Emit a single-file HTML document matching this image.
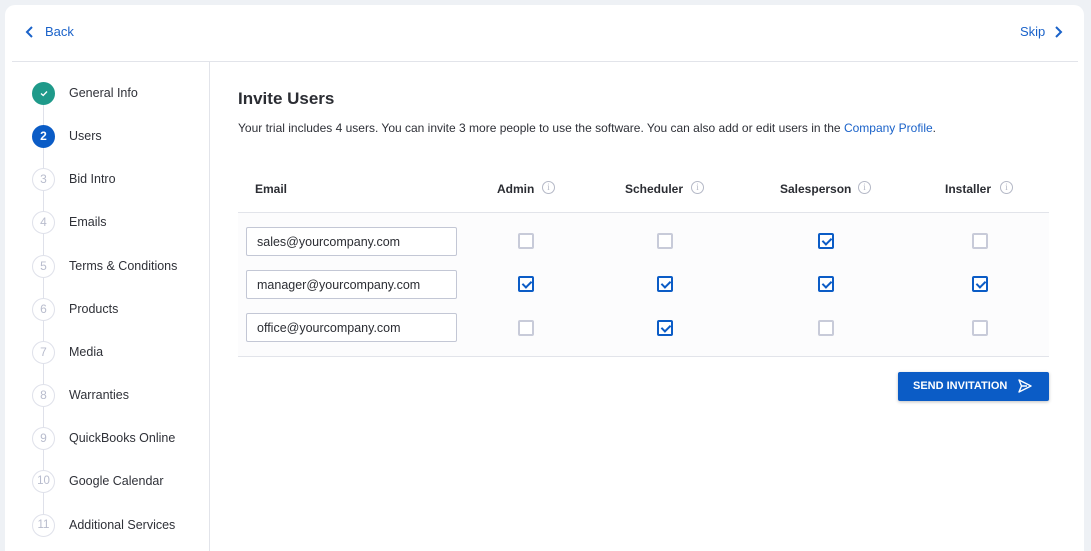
<!DOCTYPE html>
<html><head><meta charset="utf-8"><style>
*{box-sizing:border-box;margin:0;padding:0}
html,body{width:1091px;height:551px;overflow:hidden}
body{background:#eef1f5;font-family:"Liberation Sans",sans-serif;position:relative;color:#2b2d33}
.card{position:absolute;left:5px;top:5px;width:1079px;height:560px;background:#fff;border-radius:10px}
.abs{position:absolute}
.blue{color:#1a62c9}
.hline{position:absolute;height:1px;background:#e2e4ea}
.step{position:absolute;left:32px;width:23px;height:23px;border-radius:50%;border:1.5px solid #dfe1ea;background:#fff;color:#b8bccd;font-size:12px;text-align:center;line-height:20px}
.lbl{position:absolute;left:69px;font-size:12.5px;color:#2f3138}
.th{position:absolute;top:182px;font-size:12px;font-weight:bold;color:#2b2d33}
.info{position:absolute;top:181px;width:13px;height:13px;border:1px solid #b4b8c6;border-radius:50%;color:#b4b8c6;font-size:9px;text-align:center;line-height:11px;font-family:"Liberation Serif",serif}
.inp{position:absolute;left:246px;width:211px;height:29px;border:1px solid #c3c7d5;border-radius:2px;background:#fff;font-size:12.5px;padding-left:10px;line-height:28px;color:#2b2d33}
.cb{position:absolute;width:16px;height:16px;border:2px solid #c8cbd9;border-radius:2px;background:#fff}
.cb.on{border:2px solid #0b5cc6}
.cb.on::after{content:"";position:absolute;left:3.5px;top:0.5px;width:4px;height:7px;border-right:2px solid #0b5cc6;border-bottom:2px solid #0b5cc6;transform:rotate(45deg)}
</style></head><body>
<div class="card"></div>
<svg class="abs" style="left:25px;top:26px" width="10" height="12"><path d="M7 1 L2 6 L7 11" fill="none" stroke="#1a62c9" stroke-width="2"/></svg>
<div class="abs blue" style="left:45px;top:24px;font-size:13px">Back</div>
<div class="abs blue" style="left:1020px;top:24px;font-size:13px">Skip</div>
<svg class="abs" style="left:1053px;top:26px" width="10" height="12"><path d="M3 1 L8 6 L3 11" fill="none" stroke="#1a62c9" stroke-width="2"/></svg>
<div class="hline" style="left:12px;top:61px;width:1066px"></div>
<div class="abs" style="left:209px;top:62px;width:1px;height:489px;background:#e2e4ea"></div>
<div class="abs" style="left:43px;top:93px;width:1px;height:432px;background:#dfe1ea"></div>
<div class="step" style="top:82px;background:#1f9a8a;border-color:#1f9a8a"><svg width="20" height="20"><path d="M7 10.5 L9.2 12.5 L13 8.5" fill="none" stroke="#fff" stroke-width="1.3"/></svg></div>
<div class="step" style="top:125px;background:#0b5cc6;border-color:#0b5cc6;color:#fff;font-weight:bold">2</div>
<div class="step" style="top:168px">3</div>
<div class="step" style="top:211px">4</div>
<div class="step" style="top:255px">5</div>
<div class="step" style="top:298px">6</div>
<div class="step" style="top:341px">7</div>
<div class="step" style="top:384px">8</div>
<div class="step" style="top:427px">9</div>
<div class="step" style="top:470px;font-size:11.5px">10</div>
<div class="step" style="top:514px;font-size:11.5px">11</div>
<div class="lbl" style="top:86px">General Info</div>
<div class="lbl" style="top:129px">Users</div>
<div class="lbl" style="top:172px">Bid Intro</div>
<div class="lbl" style="top:215px">Emails</div>
<div class="lbl" style="top:259px">Terms &amp; Conditions</div>
<div class="lbl" style="top:302px">Products</div>
<div class="lbl" style="top:345px">Media</div>
<div class="lbl" style="top:388px">Warranties</div>
<div class="lbl" style="top:431px">QuickBooks Online</div>
<div class="lbl" style="top:474px">Google Calendar</div>
<div class="lbl" style="top:518px">Additional Services</div>

<div class="abs" style="left:238px;top:89px;font-size:17px;font-weight:bold;color:#2b2d33">Invite Users</div>
<div class="abs" style="left:238px;top:121px;font-size:12px;color:#2f3138">Your trial includes 4 users. You can invite 3 more people to use the software. You can also add or edit users in the <span class="blue">Company Profile</span>.</div>

<div class="th" style="left:255px">Email</div>
<div class="th" style="left:497px">Admin</div><div class="info" style="left:542px">i</div>
<div class="th" style="left:625px">Scheduler</div><div class="info" style="left:691px">i</div>
<div class="th" style="left:780px">Salesperson</div><div class="info" style="left:858px">i</div>
<div class="th" style="left:945px">Installer</div><div class="info" style="left:1000px">i</div>
<div class="abs" style="left:238px;top:213px;width:811px;height:143px;background:#fcfcfd"></div>
<div class="hline" style="left:238px;top:212px;width:811px"></div>
<div class="hline" style="left:238px;top:356px;width:811px"></div>

<div class="inp" style="top:227px">sales@yourcompany.com</div>
<div class="inp" style="top:270px">manager@yourcompany.com</div>
<div class="inp" style="top:313px">office@yourcompany.com</div>

<div class="cb" style="left:518px;top:233px"></div>
<div class="cb" style="left:657px;top:233px"></div>
<div class="cb on" style="left:818px;top:233px"></div>
<div class="cb" style="left:972px;top:233px"></div>
<div class="cb on" style="left:518px;top:276px"></div>
<div class="cb on" style="left:657px;top:276px"></div>
<div class="cb on" style="left:818px;top:276px"></div>
<div class="cb on" style="left:972px;top:276px"></div>
<div class="cb" style="left:518px;top:320px"></div>
<div class="cb on" style="left:657px;top:320px"></div>
<div class="cb" style="left:818px;top:320px"></div>
<div class="cb" style="left:972px;top:320px"></div>

<div class="abs" style="left:898px;top:372px;width:151px;height:29px;background:#0b5cc6;border-radius:2px;box-shadow:0 1px 3px rgba(0,0,0,.25);color:#fff;font-size:11px;font-weight:bold;line-height:29px;padding-left:15px">SEND INVITATION</div>
<svg class="abs" style="left:1017px;top:378px" width="16" height="16"><path d="M2 2 L14 8 L2 14 L4.5 8 Z M4.5 8 H10" fill="none" stroke="#fff" stroke-width="1.4" stroke-linejoin="round"/></svg>
</body></html>
